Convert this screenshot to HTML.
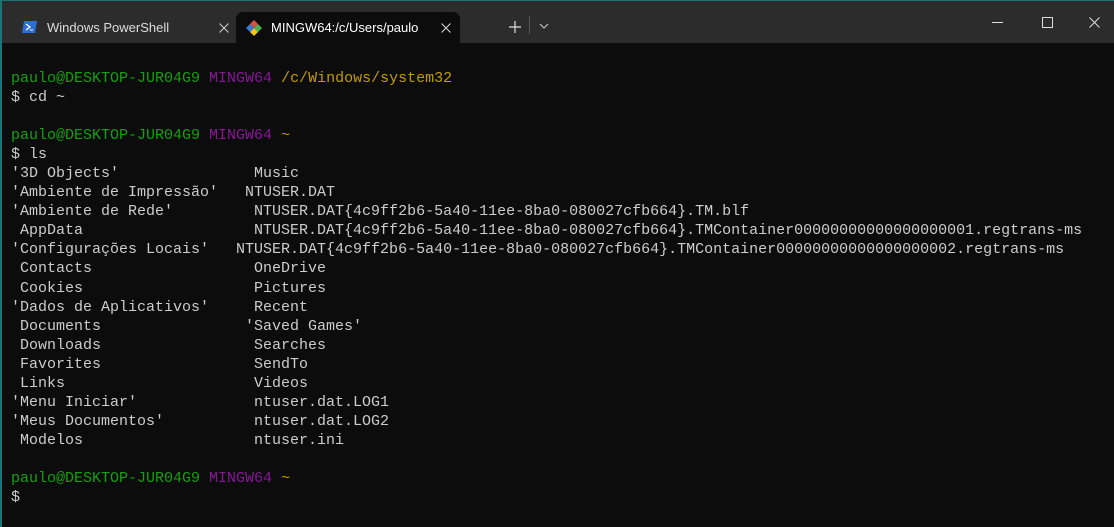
<!DOCTYPE html>
<html><head><meta charset="utf-8"><style>
body{margin:0;width:1114px;height:527px;overflow:hidden;background:#0c0c0c;font-family:"Liberation Sans",sans-serif}
.win{position:absolute;left:0;top:0;width:1112px;height:526px;border-left:2px solid #1a7377;border-top:1px solid #1a7377;background:#0c0c0c}
.bar{position:absolute;left:0;top:0;right:0;height:42px;background:#2c2c2c}
.tab{position:absolute;top:11px;height:31px;color:#fff;font-size:13px;line-height:31px}
.t1{left:8px;width:225px;color:#ddd}
.t2{left:234px;width:224px;background:#0c0c0c;border-radius:7px 7px 0 0}
.x{position:absolute;top:11px}
pre{position:absolute;left:9px;top:68px;margin:0;font-family:"Liberation Mono",monospace;font-size:15px;line-height:19.05px;color:#cccccc}
.g{color:#13a10e}.p{color:#881798}.y{color:#c19c00}
</style></head><body><div class="win">
<div class="bar">
<div class="tab t1"><svg style="position:absolute;left:12px;top:9px" width="15" height="12"><path d="M2 0h13l-2 12H0z" fill="#2d6ed1"/><path d="M4 3l4 3-4 3" stroke="#fff" fill="none" stroke-width="1.3"/><path d="M8 9h3" stroke="#fff"/></svg><span style="position:absolute;left:37px">Windows PowerShell</span><svg class="x" style="left:209px" width="10" height="10"><path d="M0.5 0.5l9 9M9.5 0.5l-9 9" stroke="#ccc" stroke-width="1"/></svg></div>
<div class="tab t2"><svg style="position:absolute;left:10px;top:8px" width="16" height="16"><path d="M8 0l4 4-4 4-4-4z" fill="#e0513b"/><path d="M12 4l4 4-4 4-4-4z" fill="#4caf50"/><path d="M8 8l4 4-4 4-4-4z" fill="#f5c518"/><path d="M4 4l4 4-4 4-4-4z" fill="#3a7bd5"/></svg><span style="position:absolute;left:35px">MINGW64:/c/Users/paulo</span><svg class="x" style="left:205px" width="10" height="10"><path d="M0.5 0.5l9 9M9.5 0.5l-9 9" stroke="#ddd" stroke-width="1"/></svg></div>
<svg style="position:absolute;left:507px;top:20px" width="12" height="12"><path d="M6 0v12M0 6h12" stroke="#ddd" stroke-width="1.2"/></svg>
<div style="position:absolute;left:527px;top:15px;width:1px;height:18px;background:#555"></div>
<svg style="position:absolute;left:537px;top:22px" width="10" height="6"><path d="M1 1l4 4 4-4" stroke="#ccc" fill="none"/></svg>
<div style="position:absolute;left:990px;top:21px;width:11px;height:1px;background:#ddd"></div>
<div style="position:absolute;left:1040px;top:16px;width:9px;height:9px;border:1px solid #ddd"></div>
<svg style="position:absolute;left:1087px;top:16px" width="11" height="11"><path d="M0.5 0.5l10 10M10.5 0.5l-10 10" stroke="#ddd" stroke-width="1"/></svg>
</div>
<pre><span class="g">paulo@DESKTOP-JUR04G9</span> <span class="p">MINGW64</span> <span class="y">/c/Windows/system32</span>
$ cd ~

<span class="g">paulo@DESKTOP-JUR04G9</span> <span class="p">MINGW64</span> <span class="y">~</span>
$ ls
'3D Objects'               Music
'Ambiente de Impressão'   NTUSER.DAT
'Ambiente de Rede'         NTUSER.DAT{4c9ff2b6-5a40-11ee-8ba0-080027cfb664}.TM.blf
 AppData                   NTUSER.DAT{4c9ff2b6-5a40-11ee-8ba0-080027cfb664}.TMContainer00000000000000000001.regtrans-ms
'Configurações Locais'   NTUSER.DAT{4c9ff2b6-5a40-11ee-8ba0-080027cfb664}.TMContainer00000000000000000002.regtrans-ms
 Contacts                  OneDrive
 Cookies                   Pictures
'Dados de Aplicativos'     Recent
 Documents                'Saved Games'
 Downloads                 Searches
 Favorites                 SendTo
 Links                     Videos
'Menu Iniciar'             ntuser.dat.LOG1
'Meus Documentos'          ntuser.dat.LOG2
 Modelos                   ntuser.ini

<span class="g">paulo@DESKTOP-JUR04G9</span> <span class="p">MINGW64</span> <span class="y">~</span>
$</pre>
</div></body></html>
